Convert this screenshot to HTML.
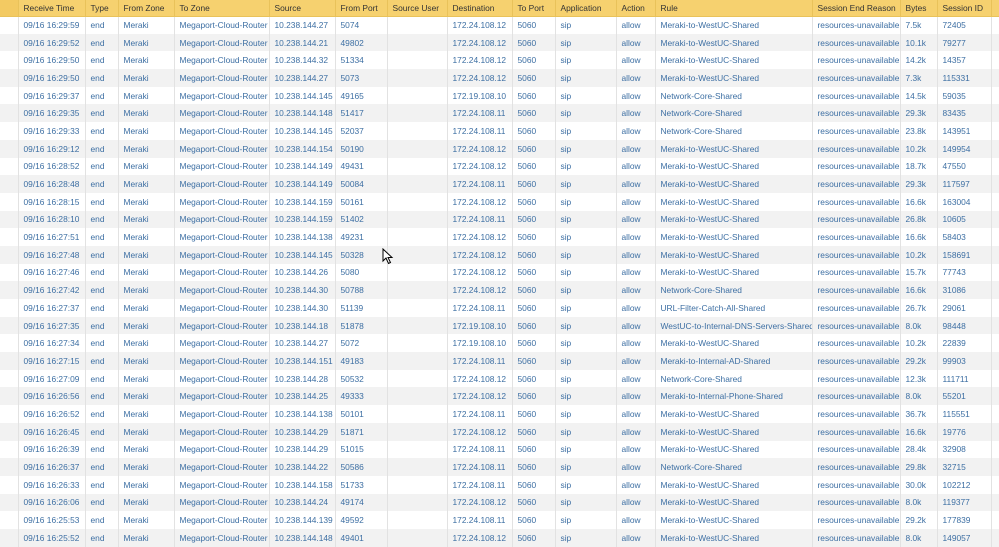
<!DOCTYPE html>
<html><head><meta charset="utf-8"><style>
body{margin:0;width:999px;height:541px;overflow:hidden;background:#fff;font-family:"Liberation Sans",sans-serif;font-size:8.4px;}
table{border-collapse:collapse;table-layout:fixed;width:1010px;position:absolute;left:0;top:0}
td,th{padding:0 0 0 5px;white-space:nowrap;overflow:hidden;text-align:left;border-right:1px solid #e2e2e2;height:17.69px;line-height:10px;color:#3d6fa3;font-weight:normal;box-sizing:border-box}
th{background:#f6d16f;color:#333;border-right:1px solid #e9c25a;height:16px;border-bottom:1px solid #e9c25a}
th:first-child{background:#f3ca62}
tr:nth-child(odd) td{background:#f2f2f2}
</style></head><body>
<table>
<colgroup><col style="width:18px"><col style="width:67px"><col style="width:33px"><col style="width:56px"><col style="width:95px"><col style="width:66px"><col style="width:52px"><col style="width:60px"><col style="width:65px"><col style="width:43px"><col style="width:61px"><col style="width:39px"><col style="width:157px"><col style="width:88px"><col style="width:37px"><col style="width:54px"><col style="width:19px"></colgroup>
<tr><th></th><th>Receive Time</th><th>Type</th><th>From Zone</th><th>To Zone</th><th>Source</th><th>From Port</th><th>Source User</th><th>Destination</th><th>To Port</th><th>Application</th><th>Action</th><th>Rule</th><th>Session End Reason</th><th>Bytes</th><th>Session ID</th><th></th></tr>
<tr><td></td><td>09/16 16:29:59</td><td>end</td><td>Meraki</td><td>Megaport-Cloud-Router</td><td>10.238.144.27</td><td>5074</td><td></td><td>172.24.108.12</td><td>5060</td><td>sip</td><td>allow</td><td>Meraki-to-WestUC-Shared</td><td>resources-unavailable</td><td>7.5k</td><td>72405</td><td></td></tr>
<tr><td></td><td>09/16 16:29:52</td><td>end</td><td>Meraki</td><td>Megaport-Cloud-Router</td><td>10.238.144.21</td><td>49802</td><td></td><td>172.24.108.12</td><td>5060</td><td>sip</td><td>allow</td><td>Meraki-to-WestUC-Shared</td><td>resources-unavailable</td><td>10.1k</td><td>79277</td><td></td></tr>
<tr><td></td><td>09/16 16:29:50</td><td>end</td><td>Meraki</td><td>Megaport-Cloud-Router</td><td>10.238.144.32</td><td>51334</td><td></td><td>172.24.108.12</td><td>5060</td><td>sip</td><td>allow</td><td>Meraki-to-WestUC-Shared</td><td>resources-unavailable</td><td>14.2k</td><td>14357</td><td></td></tr>
<tr><td></td><td>09/16 16:29:50</td><td>end</td><td>Meraki</td><td>Megaport-Cloud-Router</td><td>10.238.144.27</td><td>5073</td><td></td><td>172.24.108.12</td><td>5060</td><td>sip</td><td>allow</td><td>Meraki-to-WestUC-Shared</td><td>resources-unavailable</td><td>7.3k</td><td>115331</td><td></td></tr>
<tr><td></td><td>09/16 16:29:37</td><td>end</td><td>Meraki</td><td>Megaport-Cloud-Router</td><td>10.238.144.145</td><td>49165</td><td></td><td>172.19.108.10</td><td>5060</td><td>sip</td><td>allow</td><td>Network-Core-Shared</td><td>resources-unavailable</td><td>14.5k</td><td>59035</td><td></td></tr>
<tr><td></td><td>09/16 16:29:35</td><td>end</td><td>Meraki</td><td>Megaport-Cloud-Router</td><td>10.238.144.148</td><td>51417</td><td></td><td>172.24.108.11</td><td>5060</td><td>sip</td><td>allow</td><td>Network-Core-Shared</td><td>resources-unavailable</td><td>29.3k</td><td>83435</td><td></td></tr>
<tr><td></td><td>09/16 16:29:33</td><td>end</td><td>Meraki</td><td>Megaport-Cloud-Router</td><td>10.238.144.145</td><td>52037</td><td></td><td>172.24.108.11</td><td>5060</td><td>sip</td><td>allow</td><td>Network-Core-Shared</td><td>resources-unavailable</td><td>23.8k</td><td>143951</td><td></td></tr>
<tr><td></td><td>09/16 16:29:12</td><td>end</td><td>Meraki</td><td>Megaport-Cloud-Router</td><td>10.238.144.154</td><td>50190</td><td></td><td>172.24.108.12</td><td>5060</td><td>sip</td><td>allow</td><td>Meraki-to-WestUC-Shared</td><td>resources-unavailable</td><td>10.2k</td><td>149954</td><td></td></tr>
<tr><td></td><td>09/16 16:28:52</td><td>end</td><td>Meraki</td><td>Megaport-Cloud-Router</td><td>10.238.144.149</td><td>49431</td><td></td><td>172.24.108.12</td><td>5060</td><td>sip</td><td>allow</td><td>Meraki-to-WestUC-Shared</td><td>resources-unavailable</td><td>18.7k</td><td>47550</td><td></td></tr>
<tr><td></td><td>09/16 16:28:48</td><td>end</td><td>Meraki</td><td>Megaport-Cloud-Router</td><td>10.238.144.149</td><td>50084</td><td></td><td>172.24.108.11</td><td>5060</td><td>sip</td><td>allow</td><td>Meraki-to-WestUC-Shared</td><td>resources-unavailable</td><td>29.3k</td><td>117597</td><td></td></tr>
<tr><td></td><td>09/16 16:28:15</td><td>end</td><td>Meraki</td><td>Megaport-Cloud-Router</td><td>10.238.144.159</td><td>50161</td><td></td><td>172.24.108.12</td><td>5060</td><td>sip</td><td>allow</td><td>Meraki-to-WestUC-Shared</td><td>resources-unavailable</td><td>16.6k</td><td>163004</td><td></td></tr>
<tr><td></td><td>09/16 16:28:10</td><td>end</td><td>Meraki</td><td>Megaport-Cloud-Router</td><td>10.238.144.159</td><td>51402</td><td></td><td>172.24.108.11</td><td>5060</td><td>sip</td><td>allow</td><td>Meraki-to-WestUC-Shared</td><td>resources-unavailable</td><td>26.8k</td><td>10605</td><td></td></tr>
<tr><td></td><td>09/16 16:27:51</td><td>end</td><td>Meraki</td><td>Megaport-Cloud-Router</td><td>10.238.144.138</td><td>49231</td><td></td><td>172.24.108.12</td><td>5060</td><td>sip</td><td>allow</td><td>Meraki-to-WestUC-Shared</td><td>resources-unavailable</td><td>16.6k</td><td>58403</td><td></td></tr>
<tr><td></td><td>09/16 16:27:48</td><td>end</td><td>Meraki</td><td>Megaport-Cloud-Router</td><td>10.238.144.145</td><td>50328</td><td></td><td>172.24.108.12</td><td>5060</td><td>sip</td><td>allow</td><td>Meraki-to-WestUC-Shared</td><td>resources-unavailable</td><td>10.2k</td><td>158691</td><td></td></tr>
<tr><td></td><td>09/16 16:27:46</td><td>end</td><td>Meraki</td><td>Megaport-Cloud-Router</td><td>10.238.144.26</td><td>5080</td><td></td><td>172.24.108.12</td><td>5060</td><td>sip</td><td>allow</td><td>Meraki-to-WestUC-Shared</td><td>resources-unavailable</td><td>15.7k</td><td>77743</td><td></td></tr>
<tr><td></td><td>09/16 16:27:42</td><td>end</td><td>Meraki</td><td>Megaport-Cloud-Router</td><td>10.238.144.30</td><td>50788</td><td></td><td>172.24.108.12</td><td>5060</td><td>sip</td><td>allow</td><td>Network-Core-Shared</td><td>resources-unavailable</td><td>16.6k</td><td>31086</td><td></td></tr>
<tr><td></td><td>09/16 16:27:37</td><td>end</td><td>Meraki</td><td>Megaport-Cloud-Router</td><td>10.238.144.30</td><td>51139</td><td></td><td>172.24.108.11</td><td>5060</td><td>sip</td><td>allow</td><td>URL-Filter-Catch-All-Shared</td><td>resources-unavailable</td><td>26.7k</td><td>29061</td><td></td></tr>
<tr><td></td><td>09/16 16:27:35</td><td>end</td><td>Meraki</td><td>Megaport-Cloud-Router</td><td>10.238.144.18</td><td>51878</td><td></td><td>172.19.108.10</td><td>5060</td><td>sip</td><td>allow</td><td>WestUC-to-Internal-DNS-Servers-Shared</td><td>resources-unavailable</td><td>8.0k</td><td>98448</td><td></td></tr>
<tr><td></td><td>09/16 16:27:34</td><td>end</td><td>Meraki</td><td>Megaport-Cloud-Router</td><td>10.238.144.27</td><td>5072</td><td></td><td>172.19.108.10</td><td>5060</td><td>sip</td><td>allow</td><td>Meraki-to-WestUC-Shared</td><td>resources-unavailable</td><td>10.2k</td><td>22839</td><td></td></tr>
<tr><td></td><td>09/16 16:27:15</td><td>end</td><td>Meraki</td><td>Megaport-Cloud-Router</td><td>10.238.144.151</td><td>49183</td><td></td><td>172.24.108.11</td><td>5060</td><td>sip</td><td>allow</td><td>Meraki-to-Internal-AD-Shared</td><td>resources-unavailable</td><td>29.2k</td><td>99903</td><td></td></tr>
<tr><td></td><td>09/16 16:27:09</td><td>end</td><td>Meraki</td><td>Megaport-Cloud-Router</td><td>10.238.144.28</td><td>50532</td><td></td><td>172.24.108.12</td><td>5060</td><td>sip</td><td>allow</td><td>Network-Core-Shared</td><td>resources-unavailable</td><td>12.3k</td><td>111711</td><td></td></tr>
<tr><td></td><td>09/16 16:26:56</td><td>end</td><td>Meraki</td><td>Megaport-Cloud-Router</td><td>10.238.144.25</td><td>49333</td><td></td><td>172.24.108.12</td><td>5060</td><td>sip</td><td>allow</td><td>Meraki-to-Internal-Phone-Shared</td><td>resources-unavailable</td><td>8.0k</td><td>55201</td><td></td></tr>
<tr><td></td><td>09/16 16:26:52</td><td>end</td><td>Meraki</td><td>Megaport-Cloud-Router</td><td>10.238.144.138</td><td>50101</td><td></td><td>172.24.108.11</td><td>5060</td><td>sip</td><td>allow</td><td>Meraki-to-WestUC-Shared</td><td>resources-unavailable</td><td>36.7k</td><td>115551</td><td></td></tr>
<tr><td></td><td>09/16 16:26:45</td><td>end</td><td>Meraki</td><td>Megaport-Cloud-Router</td><td>10.238.144.29</td><td>51871</td><td></td><td>172.24.108.12</td><td>5060</td><td>sip</td><td>allow</td><td>Meraki-to-WestUC-Shared</td><td>resources-unavailable</td><td>16.6k</td><td>19776</td><td></td></tr>
<tr><td></td><td>09/16 16:26:39</td><td>end</td><td>Meraki</td><td>Megaport-Cloud-Router</td><td>10.238.144.29</td><td>51015</td><td></td><td>172.24.108.11</td><td>5060</td><td>sip</td><td>allow</td><td>Meraki-to-WestUC-Shared</td><td>resources-unavailable</td><td>28.4k</td><td>32908</td><td></td></tr>
<tr><td></td><td>09/16 16:26:37</td><td>end</td><td>Meraki</td><td>Megaport-Cloud-Router</td><td>10.238.144.22</td><td>50586</td><td></td><td>172.24.108.11</td><td>5060</td><td>sip</td><td>allow</td><td>Network-Core-Shared</td><td>resources-unavailable</td><td>29.8k</td><td>32715</td><td></td></tr>
<tr><td></td><td>09/16 16:26:33</td><td>end</td><td>Meraki</td><td>Megaport-Cloud-Router</td><td>10.238.144.158</td><td>51733</td><td></td><td>172.24.108.11</td><td>5060</td><td>sip</td><td>allow</td><td>Meraki-to-WestUC-Shared</td><td>resources-unavailable</td><td>30.0k</td><td>102212</td><td></td></tr>
<tr><td></td><td>09/16 16:26:06</td><td>end</td><td>Meraki</td><td>Megaport-Cloud-Router</td><td>10.238.144.24</td><td>49174</td><td></td><td>172.24.108.12</td><td>5060</td><td>sip</td><td>allow</td><td>Meraki-to-WestUC-Shared</td><td>resources-unavailable</td><td>8.0k</td><td>119377</td><td></td></tr>
<tr><td></td><td>09/16 16:25:53</td><td>end</td><td>Meraki</td><td>Megaport-Cloud-Router</td><td>10.238.144.139</td><td>49592</td><td></td><td>172.24.108.11</td><td>5060</td><td>sip</td><td>allow</td><td>Meraki-to-WestUC-Shared</td><td>resources-unavailable</td><td>29.2k</td><td>177839</td><td></td></tr>
<tr><td></td><td>09/16 16:25:52</td><td>end</td><td>Meraki</td><td>Megaport-Cloud-Router</td><td>10.238.144.148</td><td>49401</td><td></td><td>172.24.108.12</td><td>5060</td><td>sip</td><td>allow</td><td>Meraki-to-WestUC-Shared</td><td>resources-unavailable</td><td>8.0k</td><td>149057</td><td></td></tr>
</table>
<svg style="position:absolute;left:382px;top:248px" width="12" height="17" viewBox="0 0 12 17"><path d="M1 1 L1 13 L4 10 L6.5 15.5 L8.5 14.5 L6 9.5 L10 9.5 Z" fill="#fff" stroke="#000" stroke-width="1"/></svg>
</body></html>
